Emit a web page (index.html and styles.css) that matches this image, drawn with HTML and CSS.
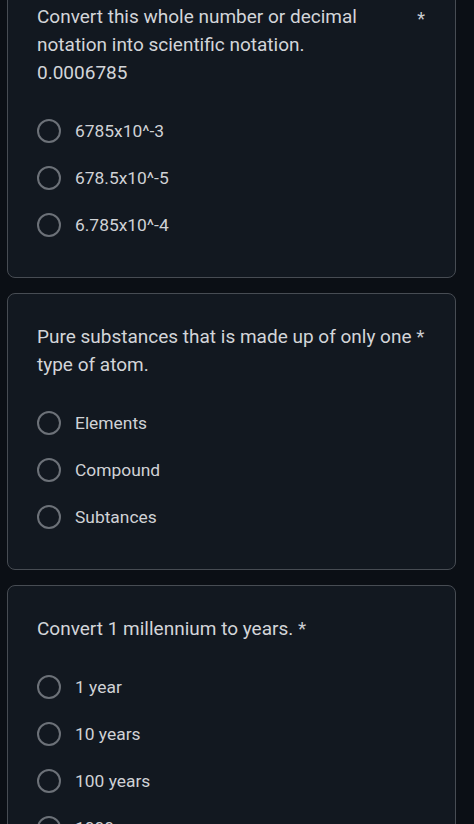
FILE: index.html
```html
<!DOCTYPE html>
<html lang="en">
<head>
<meta charset="utf-8">
<title>Quiz</title>
<link rel="stylesheet" href="styles.css">
</head>
<body>
<main class="page">
  <section class="card card-first">
    <div class="q q-split">
      <div class="q-text">Convert this whole number or decimal notation into scientific notation.<br>0.0006785</div>
      <span class="req">*</span>
    </div>
    <ul class="opts">
      <li class="opt"><span class="radio"></span><span class="lbl">6785x10^-3</span></li>
      <li class="opt"><span class="radio"></span><span class="lbl">678.5x10^-5</span></li>
      <li class="opt"><span class="radio"></span><span class="lbl">6.785x10^-4</span></li>
    </ul>
  </section>

  <section class="card">
    <div class="q">Pure substances that is made up of only one <span class="req-in">*</span> type of atom.</div>
    <ul class="opts">
      <li class="opt"><span class="radio"></span><span class="lbl">Elements</span></li>
      <li class="opt"><span class="radio"></span><span class="lbl">Compound</span></li>
      <li class="opt"><span class="radio"></span><span class="lbl">Subtances</span></li>
    </ul>
  </section>

  <section class="card">
    <div class="q">Convert 1 millennium to years. <span class="req-in">*</span></div>
    <ul class="opts">
      <li class="opt"><span class="radio"></span><span class="lbl">1 year</span></li>
      <li class="opt"><span class="radio"></span><span class="lbl">10 years</span></li>
      <li class="opt"><span class="radio"></span><span class="lbl">100 years</span></li>
      <li class="opt"><span class="radio"></span><span class="lbl">1000 years</span></li>
    </ul>
  </section>
</main>
</body>
</html>
```

FILE: styles.css
```css
* { box-sizing: border-box; }
html, body {
  margin: 0;
  padding: 0;
  background: #0b0f15;
  height: 100%;
  overflow: hidden;
}
body {
  font-family: Roboto, "Liberation Sans", Arial, sans-serif;
  color: #d2d4d8;
}
.page {
  display: flex;
  flex-direction: column;
  gap: 15px;
  padding: 0 18px 0 7px;
}
.card {
  background: #121820;
  border: 1.5px solid #474c53;
  border-radius: 8px;
  padding: 29px 20px 29px 29px;
}
.card-first {
  margin-top: -27px;
}
.q {
  font-size: 19px;
  line-height: 28px;
  color: #d3d5d9;
}
.q-split {
  display: flex;
  align-items: flex-start;
  gap: 12px;
}
.q-text {
  flex: 1;
  padding-right: 14px;
}
.req {
  font-size: 18px;
  line-height: 32px;
  margin-right: 10px;
  color: #c9ccd1;
}
.req-in { color: #c9ccd1; }
.opts {
  list-style: none;
  margin: 20px 0 0;
  padding: 0;
}
.opt {
  display: flex;
  align-items: center;
  gap: 14px;
  height: 47px;
}
.radio {
  width: 24px;
  height: 24px;
  border: 2.5px solid #6c7178;
  border-radius: 50%;
  flex: none;
}
.lbl {
  font-size: 17.4px;
  color: #d0d2d6;
}
```
